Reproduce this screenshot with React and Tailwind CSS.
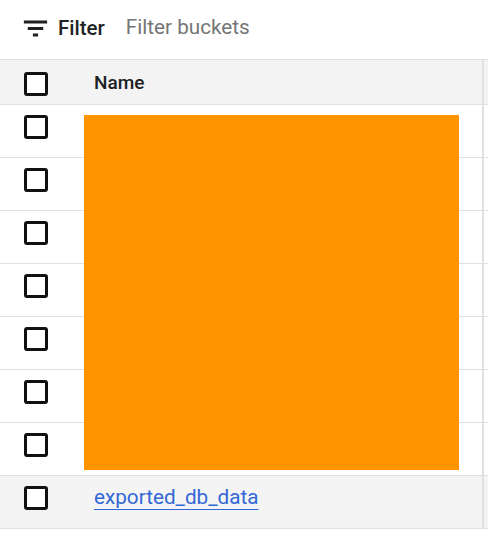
import React from "react";

function Checkbox() {
  return <div className="w-[24px] h-[24px] border-[3px] border-[#111111] rounded-[3px] bg-white" />;
}

function Row({ children, bg = "bg-white" }) {
  return (
    <div className={`flex h-[53px] ${bg} border-b border-[#e0e0e0]`}>
      <div className="w-[72px] pl-[24px] pt-[10px] shrink-0">
        <Checkbox />
      </div>
      <div className="w-[410px] shrink-0 pl-[22px] flex items-center">{children}</div>
      <div className="w-[2px] shrink-0 bg-[#e0e0e0]" />
      <div className="flex-1" />
    </div>
  );
}

export default function App() {
  return (
    <div
      className="relative w-[488px] h-[536px] bg-white overflow-hidden text-[#202124]"
      style={{ fontFamily: "Roboto, 'Liberation Sans', sans-serif" }}
    >
      <div className="h-[59px] flex items-center pb-[3px]">
        <svg className="ml-[20px]" width="31" height="31" viewBox="0 0 24 24" fill="#202124">
          <path d="M10 18.2h4v-2.4h-4v2.4zM3 5.8v2.4h18V5.8H3zm3 7.4h12v-2.4H6v2.4z" />
        </svg>
        <span className="ml-[7px] text-[20.5px] font-medium">Filter</span>
        <span className="ml-[21px] text-[20.7px] text-[#757575]">Filter buckets</span>
      </div>
      <div className="border-t border-[#e0e0e0]">
        <div className="flex h-[45px] bg-[#f3f3f3] border-b border-[#e0e0e0]">
          <div className="w-[72px] pl-[24px] pt-[12px] shrink-0">
            <Checkbox />
          </div>
          <div className="w-[410px] shrink-0 pl-[22px] pt-[3px] flex items-center text-[19px] font-medium">Name</div>
          <div className="w-[2px] shrink-0 bg-[#e0e0e0]" />
          <div className="flex-1" />
        </div>
        <Row />
        <Row />
        <Row />
        <Row />
        <Row />
        <Row />
        <Row />
        <Row bg="bg-[#f4f4f4]">
          <span className="text-[20.7px] text-[#3367d6] underline decoration-1 underline-offset-[5px] -mt-[8px]">
            exported_db_data
          </span>
        </Row>
      </div>
      <div className="absolute left-[84px] top-[115px] w-[375px] h-[355px] bg-[#ff9400]" />
    </div>
  );
}
